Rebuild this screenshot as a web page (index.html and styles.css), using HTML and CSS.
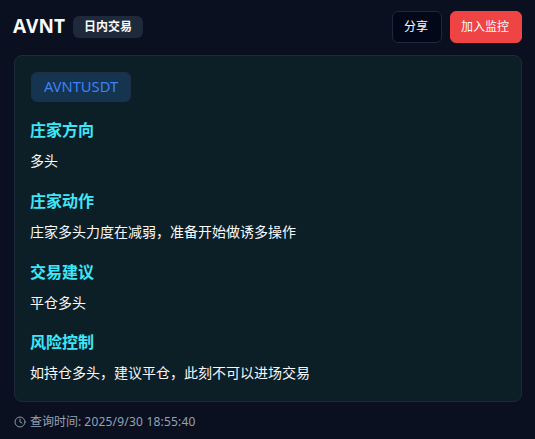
FILE: index.html
```
<!DOCTYPE html>
<html lang="zh-CN">
  <head>
    <meta charset="UTF-8" />
    <meta name="viewport" content="width=device-width, initial-scale=1.0" />
    <title>AVNT</title>
    <link rel="stylesheet" href="styles.css">
  </head>
  <body>
    <div class="container">
      <header class="header">
        <h1>AVNT</h1>
        <span class="badge">日内交易</span>
        <div class="actions">
          <button class="btn btn-share">分享</button>
          <button class="btn btn-monitor">加入监控</button>
        </div>
      </header>

      <main class="card">
        <span class="symbol">AVNTUSDT</span>
        <section>
          <h2>庄家方向</h2>
          <p>多头</p>
        </section>
        <section>
          <h2>庄家动作</h2>
          <p>庄家多头力度在减弱，准备开始做诱多操作</p>
        </section>
        <section>
          <h2>交易建议</h2>
          <p>平仓多头</p>
        </section>
        <section>
          <h2>风险控制</h2>
          <p>如持仓多头，建议平仓，此刻不可以进场交易</p>
        </section>
      </main>

      <footer class="footer">
        <svg class="clock" viewBox="0 0 24 24" fill="none" stroke="currentColor" stroke-width="2" stroke-linecap="round" stroke-linejoin="round">
          <circle cx="12" cy="12" r="10" />
          <path d="M12 6v6l4 2" />
        </svg>
        <span>查询时间: <span class="time">2025/9/30 18:55:40</span></span>
      </footer>
    </div>
  </body>
</html>
```

FILE: styles.css
```
* {
  box-sizing: border-box;
}
body {
  font-family: "Noto Sans", "Noto Sans CJK SC", sans-serif;
  margin: 0;
  background: #0a101f;
  color: #f8fafc;
}
.container {
  padding: 11px 13px 0 14px;
}
.header {
  display: flex;
  align-items: center;
  height: 32px;
}
h1 {
  margin: 0 8px 2px -1px;
  width: 52px;
  font-family: "Open Sans", sans-serif;
  font-size: 19px;
  line-height: 28px;
  font-weight: 700;
  white-space: nowrap;
}
.badge {
  width: 70px;
  height: 22px;
  border-radius: 6px;
  background: #1e293b;
  font-size: 12px;
  line-height: 21px;
  font-weight: 700;
  text-align: center;
}
.actions {
  display: flex;
  gap: 8px;
  margin-left: auto;
}
.btn {
  height: 32px;
  padding: 0 12px 0 10px;
  border: 1px solid #1e293b;
  border-radius: 6px;
  color: #f8fafc;
  font-family: inherit;
  font-size: 12px;
  line-height: 30px;
  font-weight: 400;
  cursor: pointer;
}
.btn-share {
  width: 50px;
  background: #020817;
}
.btn-monitor {
  width: 72px;
  background: #ef4444;
  border-color: #ef4444;
}
.card {
  display: flex;
  flex-direction: column;
  gap: 16px;
  margin-top: 12px;
  padding: 16px;
  border: 1px solid #1e293b;
  border-radius: 8px;
  background: #0c1f26;
}
.symbol {
  align-self: flex-start;
  width: 100px;
  height: 30px;
  border: 1px solid #1e2f45;
  border-radius: 6px;
  background: #15344f;
  color: #3b82f6;
  font-size: 14.7px;
  line-height: 26px;
  text-align: center;
}
section {
  margin-left: -1px;
}
h2 {
  margin: 0 0 8px;
  color: #3fe6fa;
  font-size: 16px;
  line-height: 24px;
  font-weight: 700;
}
p {
  margin: 0;
  font-size: 14px;
  line-height: 22.75px;
}
.footer {
  display: flex;
  align-items: center;
  gap: 4px;
  margin-top: 12px;
  color: #94a3b8;
  font-size: 12px;
  line-height: 16px;
}
.time {
  letter-spacing: 0.2px;
}
.clock {
  width: 12px;
  height: 12px;
  color: #829ca3;
}
```
